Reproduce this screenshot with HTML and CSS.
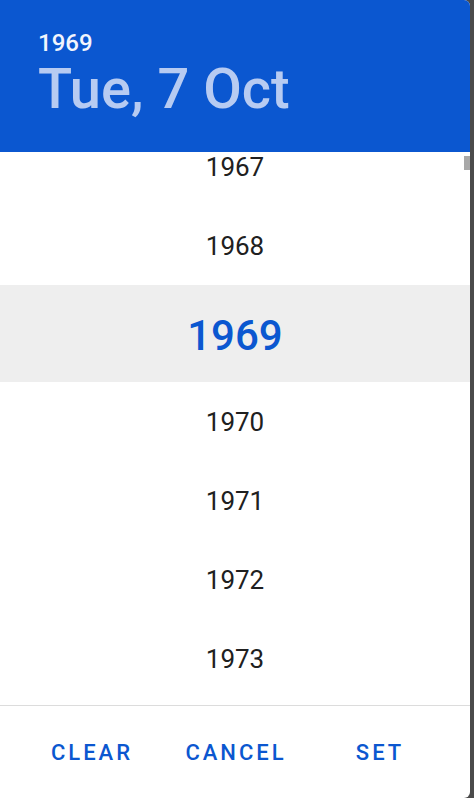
FILE: index.html
```html
<!DOCTYPE html>
<html>
<head>
<meta charset="utf-8">
<link rel="stylesheet" href="styles.css">
</head>
<body>
<div class="dialog">
  <header class="head">
    <div class="head-year">1969</div>
    <div class="head-date">Tue, 7 Oct</div>
  </header>
  <div class="years">
    <div class="year-list">
      <div class="year">1967</div>
      <div class="year">1968</div>
      <div class="year selected">1969</div>
      <div class="year">1970</div>
      <div class="year">1971</div>
      <div class="year">1972</div>
      <div class="year">1973</div>
    </div>
    <div class="thumb"></div>
  </div>
  <footer class="actions">
    <button class="btn">CLEAR</button>
    <button class="btn">CANCEL</button>
    <button class="btn">SET</button>
  </footer>
</div>
</body>
</html>
```
FILE: styles.css
```css
html, body {
  margin: 0;
  padding: 0;
  height: 100%;
}
body {
  background: #4b4b4b;
  font-family: Roboto, "Liberation Sans", sans-serif;
  overflow: hidden;
}
.dialog {
  width: 470px;
  height: 798px;
  background: #ffffff;
  border-radius: 0 6px 6px 0;
  overflow: hidden;
  display: flex;
  flex-direction: column;
}
.head {
  background: #0b57d0;
  height: 152px;
  box-sizing: border-box;
  padding: 32px 38px 0 38px;
  flex: none;
}
.head-year {
  font-size: 24px;
  line-height: 22px;
  font-weight: 500;
  color: #f2f5fd;
}
.head-date {
  margin-top: 2px;
  font-size: 56px;
  line-height: 66px;
  font-weight: 500;
  color: #b7cbf2;
}
.years {
  position: relative;
  height: 553px;
  overflow: hidden;
  flex: none;
}
.year-list {
  margin-top: -25px;
}
.year {
  height: 79px;
  display: flex;
  align-items: center;
  justify-content: center;
  font-size: 26px;
  color: #202020;
}
.year.selected {
  height: 97px;
  box-sizing: border-box;
  padding-top: 3px;
  background: #eeeeee;
  color: #0b57d0;
  font-size: 42px;
  font-weight: 500;
}
.thumb {
  position: absolute;
  right: 0;
  top: 4px;
  width: 6px;
  height: 14px;
  background: #a8a8a8;
}
.actions {
  flex: 1;
  border-top: 1px solid #dcdcdc;
  display: grid;
  grid-template-columns: 144px 144px 144px;
  padding-left: 20px;
  align-items: center;
}
.btn {
  background: none;
  border: 0;
  padding: 0;
  font-family: Roboto, "Liberation Sans", sans-serif;
  font-size: 22px;
  font-weight: 500;
  letter-spacing: 3px;
  color: #0b57d0;
  text-align: center;
}
```
